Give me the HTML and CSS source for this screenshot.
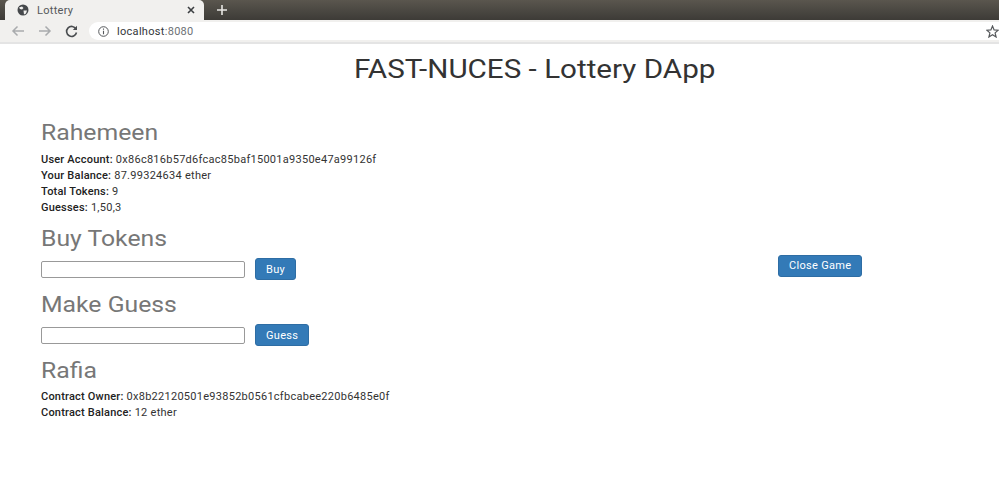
FILE: index.html
```html
<!DOCTYPE html>
<html lang="en">
<head>
<meta charset="utf-8">
<title>Lottery</title>
<link rel="stylesheet" href="styles.css">
</head>
<body>
<div class="tabstrip">
  <div class="tab">
    <svg class="globe" width="12" height="12" viewBox="0 0 12 12"><circle cx="6" cy="6" r="5.5" fill="#45484b"/><path d="M2 3.5 L5 2.5 L6.5 4 L5 5.5 L3 5 Z M6.5 6.5 L10 6.5 L9 9.5 L7 10.5 Z" fill="#f1f0ee"/></svg>
    <span class="tab-title">Lottery</span>
    <svg class="tab-close" width="8" height="8" viewBox="0 0 8 8"><path d="M1 1 L7 7 M7 1 L1 7" stroke="#3c3f42" stroke-width="1.6"/></svg>
  </div>
  <svg class="newtab" width="10" height="10" viewBox="0 0 10 10"><path d="M5 0 V10 M0 5 H10" stroke="#e8e6e3" stroke-width="1.6"/></svg>
</div>
<div class="toolbar">
  <svg class="nav" width="14" height="12" viewBox="0 0 14 12"><path d="M13 6 H2 M6.5 1.5 L2 6 L6.5 10.5" fill="none" stroke="#a9abad" stroke-width="1.5"/></svg>
  <svg class="nav" width="14" height="12" viewBox="0 0 14 12"><path d="M1 6 H12 M7.5 1.5 L12 6 L7.5 10.5" fill="none" stroke="#a9abad" stroke-width="1.5"/></svg>
  <svg class="nav" width="13" height="13" viewBox="0 0 13 13"><path d="M11 4 A5 5 0 1 0 11.5 7.5" fill="none" stroke="#494c4f" stroke-width="1.6"/><path d="M12 0.8 V5 H7.8 Z" fill="#494c4f"/></svg>
  <div class="omnibox">
    <svg class="info" width="11" height="11" viewBox="0 0 11 11"><circle cx="5.5" cy="5.5" r="4.8" fill="none" stroke="#55585b"/><path d="M5.5 4.8 V8.3 M5.5 2.6 V3.8" stroke="#55585b" stroke-width="1.1"/></svg>
    <span class="host">localhost</span><span class="port">:8080</span>
    <svg class="star" width="13" height="13" viewBox="0 0 13 13"><path d="M6.5 1 L8.1 4.9 L12.2 5.2 L9.1 7.9 L10.1 12 L6.5 9.8 L2.9 12 L3.9 7.9 L0.8 5.2 L4.9 4.9 Z" fill="none" stroke="#55585b" stroke-width="1.2"/></svg>
  </div>
</div>
<main class="page">
  <h1 class="title"><span class="title-text">FAST-NUCES - Lottery DApp</span></h1>
  <div class="columns">
    <section class="left">
      <h2 class="heading first">Rahemeen</h2>
      <p class="line"><b>User Account:</b> 0x86c816b57d6fcac85baf15001a9350e47a99126f</p>
      <p class="line"><b>Your Balance:</b> 87.99324634 ether</p>
      <p class="line"><b>Total Tokens:</b> 9</p>
      <p class="line"><b>Guesses:</b> 1,50,3</p>
      <h2 class="heading">Buy Tokens</h2>
      <div class="form-row"><input class="field" type="text"><button class="btn">Buy</button></div>
      <h2 class="heading">Make Guess</h2>
      <div class="form-row"><input class="field" type="text"><button class="btn">Guess</button></div>
      <h2 class="heading">Rafia</h2>
      <p class="line"><b>Contract Owner:</b> 0x8b22120501e93852b0561cfbcabee220b6485e0f</p>
      <p class="line"><b>Contract Balance:</b> 12 ether</p>
    </section>
    <aside class="right"><button class="btn">Close Game</button></aside>
  </div>
</main>
</body>
</html>
```
FILE: styles.css
```css
* { box-sizing: border-box; }
html, body { margin: 0; height: 100%; overflow: hidden; background: #fff; }
body { font-family: Roboto, "Liberation Sans", sans-serif; color: #333; }
.tabstrip { height: 20px; display: flex; align-items: center; background: linear-gradient(#5a564e, #3d3b37); padding-left: 5px; }
.tab { width: 199px; height: 20px; background: #f1f0ee; border-radius: 5px 5px 0 0; display: flex; align-items: center; padding: 0 9px 0 12px; }
.globe { flex: none; }
.tab-title { font-size: 11px; color: #55585b; margin-left: 8px; flex: 1; letter-spacing: .3px; }
.newtab { margin-left: 13px; }
.toolbar { height: 24px; background: #f1f0ee; border-bottom: 2px solid #e4e4e4; display: flex; align-items: center; padding: 0 0 0 11px; }
.nav { flex: none; margin-right: 13px; }
.omnibox { flex: 1; height: 18px; margin-left: -2px; background: #fff; border-radius: 9px 0 0 9px; display: flex; align-items: center; padding-left: 9px; position: relative; font-size: 11px; letter-spacing: .3px; }
.info { margin-right: 8px; }
.host { color: #33363a; }
.port { color: #6d7175; }
.star { position: absolute; right: 0; top: 3px; }
.page { padding-top: 9px; }
.title { margin: 0 0 0 70px; text-align: center; font-size: 26px; line-height: 32px; font-weight: 400; color: #333; }
.title-text { display: inline-block; transform: scaleX(1.139); }
.columns { display: flex; padding: 36px 0 0 41px; }
.left { width: 737px; flex: none; }
.right { padding-top: 133px; }
.heading { width: fit-content; margin: 11px 0 6.5px; font-size: 22px; line-height: 24px; font-weight: 400; color: #777; transform: scaleX(1.125); transform-origin: left center; }
.heading.first { margin-top: 0; }
.line { margin: 0; font-size: 11px; line-height: 16px; color: #333; letter-spacing: .27px; }
.line b { font-weight: 500; color: #222; letter-spacing: .2px; }
.form-row { display: flex; align-items: center; gap: 10px; padding: 1px 0 1.5px; }
.field { width: 204px; height: 17px; border: 1px solid #999; border-radius: 2px; background: #fff; padding: 0; }
.btn { height: 22px; padding: 0 10px; background: #337ab7; border: 1px solid #2e6da4; border-radius: 3px; color: #fff; font: 400 11px Roboto, "Liberation Sans", sans-serif; letter-spacing: .3px; }
```
